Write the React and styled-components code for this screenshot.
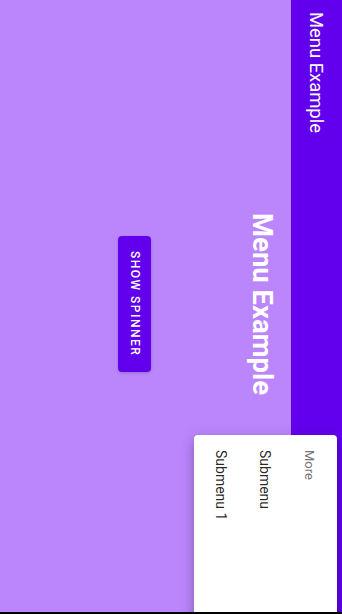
import React from 'react';
import styled, { createGlobalStyle } from 'styled-components';

const GlobalStyle = createGlobalStyle`
  html, body {
    margin: 0;
    padding: 0;
    background: #000;
  }
  * {
    box-sizing: border-box;
  }
`

// the whole screen is laid out sideways, so flow runs right to left
const Screen = styled.div`
  position: relative;
  writing-mode: vertical-rl;
  width: 342px;
  height: 612px;
  overflow: hidden;
  background: #bb86fc;
  font-family: Roboto, "Liberation Sans", sans-serif;
`

const AppBar = styled.header`
  display: flex;
  align-items: center;
  block-size: 51px;
  inline-size: 100%;
  padding-inline-start: 12px;
  background: #6200ee;
  color: #fff;
  font-size: 18.4px;
`

const Content = styled.main`
  display: flex;
  flex-direction: column;
  align-items: center;
  padding-inline-end: 4px;
`

const Title = styled.h1`
  margin: 0;
  margin-block-start: 12px;
  font-size: 27.5px;
  font-weight: 700;
  line-height: normal;
  color: #fff;
`

const Button = styled.button`
  writing-mode: vertical-rl;
  display: inline-flex;
  align-items: center;
  justify-content: center;
  margin: 0;
  margin-block-start: 95px;
  block-size: 33px;
  padding: 0;
  padding-inline: 15px;
  border: none;
  border-radius: 4px;
  background: #6200ee;
  color: #fff;
  font-family: Roboto, "Liberation Sans", sans-serif;
  font-size: 12px;
  font-weight: 500;
  letter-spacing: 1.5px;
  text-transform: uppercase;
  box-shadow: 0 1px 3px rgba(0, 0, 0, 0.2);
  cursor: pointer;
`

const Menu = styled.ul`
  position: absolute;
  top: 435px;
  right: 5px;
  width: 143px;
  height: 200px;
  margin: 0;
  padding: 0;
  padding-block-start: 6px;
  list-style: none;
  background: #fff;
  border-radius: 4px;
  box-shadow: 0 5px 5px -3px rgba(0, 0, 0, 0.2), 0 8px 10px 1px rgba(0, 0, 0, 0.14), 0 3px 14px 2px rgba(0, 0, 0, 0.12);
`

const MenuItem = styled.li`
  block-size: 44px;
  line-height: 44px;
  padding-inline-start: 15px;
  font-size: ${p => (p.$header ? '13px' : '14px')};
  color: ${p => (p.$header ? '#757575' : 'rgba(0, 0, 0, 0.87)')};
  white-space: nowrap;
`

const App = () => {
  return (
    <>
      <GlobalStyle />
      <Screen>
        <AppBar>Menu Example</AppBar>
        <Content>
          <Title>Menu Example</Title>
          <Button>Show Spinner</Button>
        </Content>
        <Menu>
          <MenuItem $header>More</MenuItem>
          <MenuItem>Submenu</MenuItem>
          <MenuItem>Submenu 1</MenuItem>
        </Menu>
      </Screen>
    </>
  )
}

export default App;
